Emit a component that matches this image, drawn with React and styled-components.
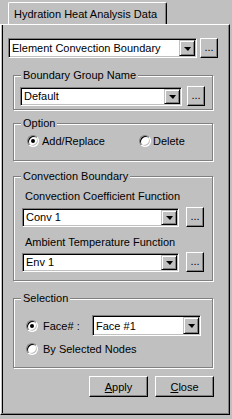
import React from "react";
import styled, { createGlobalStyle } from "styled-components";

const Global = createGlobalStyle`
    body {
        margin: 0;
        background: #c0c0c0;
    }
`;

const Page = styled.div`
    width: 232px;
    height: 419px;
    background: #c0c0c0;
    font-family: "Liberation Sans", Arial, sans-serif;
    font-size: 11px;
    color: #000;
    overflow: hidden;
    display: flex;
    flex-direction: column;
`;

const TabStrip = styled.div`
    height: 24px;
    box-sizing: border-box;
    padding: 2px 0 0 8px;
    display: flex;
`;

const Tab = styled.div`
    width: 159px;
    height: 22px;
    box-sizing: border-box;
    border: 1px solid;
    border-color: #fff #000 transparent #fff;
    border-bottom: none;
    border-radius: 2px 2px 0 0;
    box-shadow: inset -1px 0 0 #808080;
    padding-left: 5px;
    display: flex;
    align-items: center;
    line-height: 14px;
`;

const Panel = styled.div`
    width: 230px;
    height: 391px;
    box-sizing: border-box;
    border: 1px solid;
    border-color: #fff #000 #000 #fff;
    box-shadow: inset -1px -1px 0 #808080, inset 1px 0 0 #c0c0c0, inset 2px 0 0 #000;
    padding: 13px 0 0 7px;
    display: flex;
    flex-direction: column;
`;

const Row = styled.div`
    display: flex;
    align-items: center;
    gap: ${(p) => p.$gap || 0}px;
    margin-top: ${(p) => p.$top || 0}px;
    margin-left: ${(p) => p.$left || 0}px;
`;

const Combo = styled.div`
    width: ${(p) => p.$width}px;
    height: ${(p) => p.$height || 19}px;
    box-sizing: border-box;
    background: #fff;
    border: 1px solid;
    border-color: #808080 #fff #fff #808080;
    box-shadow: inset 1px 1px 0 #000, inset -1px -1px 0 #c0c0c0;
    padding: 1px;
    display: flex;
`;

const ComboValue = styled.div`
    flex: 1;
    padding-left: 2px;
    display: flex;
    align-items: center;
    white-space: nowrap;
    overflow: hidden;
`;

const ArrowButton = styled.div`
    width: 16px;
    box-sizing: border-box;
    background: #c0c0c0;
    border: 1px solid;
    border-color: #c0c0c0 #000 #000 #c0c0c0;
    box-shadow: inset 1px 1px 0 #fff, inset -1px -1px 0 #808080;
    display: flex;
    align-items: center;
    justify-content: center;

    &::after {
        content: "";
        width: 0;
        height: 0;
        border-left: 4px solid transparent;
        border-right: 3px solid transparent;
        border-top: 4px solid #000;
        margin-top: 1px;
    }
`;

const Button = styled.div`
    width: ${(p) => p.$width}px;
    height: ${(p) => p.$height}px;
    box-sizing: border-box;
    background: #c0c0c0;
    border: 1px solid;
    border-color: #fff #000 #000 #fff;
    box-shadow: inset -1px -1px 0 #808080;
    display: flex;
    align-items: center;
    justify-content: center;
    line-height: 12px;
    padding-bottom: ${(p) => p.$dots ? 3 : 0}px;
`;

const Group = styled.div`
    width: 200px;
    box-sizing: border-box;
    margin: ${(p) => p.$top}px 0 0 5px;
    border: 1px solid #808080;
    box-shadow: inset 1px 1px 0 #fff, 1px 1px 0 #fff;
    padding: 0 0 ${(p) => p.$bottom}px ${(p) => p.$left}px;
    display: flex;
    flex-direction: column;
`;

const Caption = styled.div`
    align-self: flex-start;
    margin: -8px 0 0 ${(p) => 7 - p.$left}px;
    padding: 0 2px;
    background: #c0c0c0;
    line-height: 14px;
`;

const FieldLabel = styled.div`
    line-height: 14px;
    margin: ${(p) => p.$top}px 0 0 3px;
`;

const RadioItem = styled.div`
    display: flex;
    align-items: center;
    gap: ${(p) => p.$gap}px;
    width: ${(p) => (p.$width ? `${p.$width}px` : "auto")};
    height: 14px;
    line-height: 14px;
`;

const RadioDot = styled.span`
    width: 12px;
    height: 12px;
    box-sizing: border-box;
    flex: none;
    border-radius: 50%;
    background: #fff;
    border: 1px solid;
    border-color: #808080 #fff #fff #808080;
    box-shadow: inset 1px 1px 0 #000, inset -1px -1px 0 #c0c0c0;
    display: flex;
    align-items: center;
    justify-content: center;

    &::after {
        content: "";
        width: 4px;
        height: 4px;
        border-radius: 50%;
        background: #000;
        display: ${(p) => (p.$checked ? "block" : "none")};
    }
`;

const ButtonRow = styled.div`
    width: 206px;
    margin-top: 8px;
    display: flex;
    justify-content: flex-end;
    gap: 7px;
`;

function ComboBox({ width, height, value }) {
    return (
        <Combo $width={width} $height={height}>
            <ComboValue>{value}</ComboValue>
            <ArrowButton />
        </Combo>
    );
}

function Radio({ label, checked, gap, width }) {
    return (
        <RadioItem $gap={gap} $width={width}>
            <RadioDot $checked={checked} />
            <span>{label}</span>
        </RadioItem>
    );
}

export default function App() {
    return (
        <Page>
            <Global />
            <TabStrip>
                <Tab>Hydration Heat Analysis Data</Tab>
            </TabStrip>
            <Panel>
                <Row $gap={3}>
                    <ComboBox width={189} height={20} value="Element Convection Boundary" />
                    <Button $width={18} $height={20} $dots>...</Button>
                </Row>

                <Group $top={17} $bottom={3} $left={6}>
                    <Caption $left={6}>Boundary Group Name</Caption>
                    <Row $top={4} $gap={5}>
                        <ComboBox width={162} height={19} value="Default" />
                        <Button $width={18} $height={20} $dots>...</Button>
                    </Row>
                </Group>

                <Group $top={13} $bottom={12} $left={13}>
                    <Caption $left={13}>Option</Caption>
                    <Row $top={4}>
                        <Radio label="Add/Replace" checked gap={3} width={112} />
                        <Radio label="Delete" gap={2} />
                    </Row>
                </Group>

                <Group $top={15} $bottom={8} $left={8}>
                    <Caption $left={8}>Convection Boundary</Caption>
                    <FieldLabel $top={6}>Convection Coefficient Function</FieldLabel>
                    <Row $top={4} $gap={7}>
                        <ComboBox width={157} height={19} value="Conv 1" />
                        <Button $width={18} $height={20} $dots>...</Button>
                    </Row>
                    <FieldLabel $top={8}>Ambient Temperature Function</FieldLabel>
                    <Row $top={3} $gap={7}>
                        <ComboBox width={157} height={19} value="Env 1" />
                        <Button $width={18} $height={20} $dots>...</Button>
                    </Row>
                </Group>

                <Group $top={17} $bottom={11} $left={12}>
                    <Caption $left={12}>Selection</Caption>
                    <Row $top={10}>
                        <Radio label="Face# :" checked gap={5} width={66} />
                        <ComboBox width={109} height={21} value="Face #1" />
                    </Row>
                    <Row $top={6}>
                        <Radio label="By Selected Nodes" gap={5} />
                    </Row>
                </Group>

                <ButtonRow>
                    <Button $width={59} $height={21}><span><u>A</u>pply</span></Button>
                    <Button $width={59} $height={21}><span><u>C</u>lose</span></Button>
                </ButtonRow>
            </Panel>
        </Page>
    );
}
